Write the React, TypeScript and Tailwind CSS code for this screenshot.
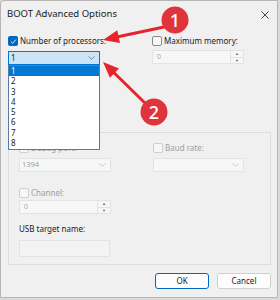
import React from "react";

const font = { fontFamily: '"Noto Sans", "Open Sans", sans-serif' };

function Check({ checked, disabled }: { checked?: boolean; disabled?: boolean }) {
  if (checked) {
    return (
      <span className="flex h-[10px] w-[10px] shrink-0 items-center justify-center rounded-[2px] bg-[#0067c0]">
        <svg width="7" height="7" viewBox="0 0 8 8">
          <path d="M1.2 4.2 L3.1 6 L6.8 1.8" fill="none" stroke="#fff" strokeWidth="1" />
        </svg>
      </span>
    );
  }
  return (
    <span
      className={
        "h-[10px] w-[10px] shrink-0 rounded-[2px] border bg-[#f7f7f7] " +
        (disabled ? "border-[#cfcfcf]" : "border-[#8a8a8a]")
      }
    />
  );
}

function Chevron({ color = "#9a9a9a" }: { color?: string }) {
  return (
    <svg width="7" height="4" viewBox="0 0 7 4">
      <path d="M0.5 0.5 L3.5 3.3 L6.5 0.5" fill="none" stroke={color} strokeWidth="0.8" />
    </svg>
  );
}

function Spin({ w, value }: { w: string; value: string }) {
  return (
    <div className="flex h-[14px]">
      <div className={`${w} flex items-center border border-[#e3e3e3] bg-[#f7f7f7] pl-[4px] text-[7px] text-[#a8a8a8]`}>
        {value}
      </div>
      <div className="flex w-[13px] flex-col border border-l-0 border-[#e3e3e3] bg-[#f7f7f7]">
        <div className="flex flex-1 items-center justify-center border-b border-[#e3e3e3] text-[4px] text-[#6a6a6a]">▲</div>
        <div className="flex flex-1 items-center justify-center text-[4px] text-[#6a6a6a]">▼</div>
      </div>
    </div>
  );
}

// red callout arrow: shaft from (x1,y1) to a filled head whose tip is (x2,y2)
function Arrow({ x1, y1, x2, y2 }: { x1: number; y1: number; x2: number; y2: number }) {
  const dx = x2 - x1;
  const dy = y2 - y1;
  const len = Math.hypot(dx, dy);
  const ux = dx / len;
  const uy = dy / len;
  const hl = 16;
  const hw = 6.5;
  const bx = x2 - ux * hl;
  const by = y2 - uy * hl;
  const head = `M${x2} ${y2} L${bx - uy * hw} ${by + ux * hw} L${bx + uy * hw} ${by - ux * hw} Z`;
  return (
    <g>
      <line x1={x1} y1={y1} x2={bx + ux * 2} y2={by + uy * 2} stroke="#e8232e" strokeWidth="3" strokeLinecap="round" />
      <path d={head} fill="#e8232e" />
    </g>
  );
}

export default function App() {
  const items = ["1", "2", "3", "4", "5", "6", "7", "8"];
  return (
    <div className="relative h-[300px] w-[280px] overflow-hidden bg-[#d9dadc]" style={font}>
      <div className="flex h-[298px] w-[278px] flex-col rounded-tl-[4px] border border-[#b5b5b5] bg-[#f0f0f0] text-[#1b1b1b]">
        {/* title bar */}
        <div className="flex h-[27px] items-center justify-between pl-[6px] pr-[8px]">
          <span className="text-[9.5px]">BOOT Advanced Options</span>
          <svg width="8" height="8" viewBox="0 0 8 8">
            <path d="M0.5 0.5 L7.5 7.5 M7.5 0.5 L0.5 7.5" stroke="#333" strokeWidth="0.9" />
          </svg>
        </div>

        {/* top options */}
        <div className="mt-[8px] flex pl-[7px]">
          <div className="w-[144px]">
            <div className="flex h-[10px] items-center gap-[2px] text-[8px]">
              <Check checked />
              <span>Number of processors:</span>
            </div>
            <div className="mt-[5px] flex h-[14px] w-[92px] items-center justify-between border border-[#0078d4] bg-[#cce4f7] pl-[2px] pr-[4px] text-[8px]">
              <span>1</span>
              <Chevron color="#6a7a8a" />
            </div>
          </div>
          <div>
            <div className="flex h-[10px] items-center gap-[2px] text-[8px]">
              <Check />
              <span>Maximum memory:</span>
            </div>
            <div className="mt-[4px]">
              <Spin w="w-[79px]" value="0" />
            </div>
          </div>
        </div>

        {/* debug settings group */}
        <div className="ml-[7px] mt-[67px] h-[133px] w-[263px] border border-[#dcdcdc] px-[10px] pt-[10px]">
          <div className="flex">
            <div className="w-[134px]">
              <div className="flex h-[10px] items-center gap-[2px] text-[8px] text-[#a0a0a0]">
                <Check disabled />
                <span>Debug port:</span>
              </div>
              <div className="mt-[5px] flex h-[14px] w-[92px] items-center justify-between border border-[#e3e3e3] bg-[#f7f7f7] pl-[2px] pr-[4px] text-[7.5px] text-[#a0a0a0]">
                <span>1394</span>
                <Chevron color="#c0c0c0" />
              </div>
            </div>
            <div>
              <div className="flex h-[10px] items-center gap-[2px] text-[8px] text-[#a0a0a0]">
                <Check disabled />
                <span>Baud rate:</span>
              </div>
              <div className="mt-[5px] flex h-[14px] w-[91px] items-center justify-end border border-[#e3e3e3] bg-[#f7f7f7] pr-[4px]">
                <Chevron color="#c0c0c0" />
              </div>
            </div>
          </div>
          <div className="mt-[16px] flex h-[10px] items-center gap-[2px] text-[8px] text-[#a0a0a0]">
            <Check disabled />
            <span>Channel:</span>
          </div>
          <div className="mt-[2px]">
            <Spin w="w-[79px]" value="0" />
          </div>
          <div className="mt-[10px] text-[8px] leading-[10px]">USB target name:</div>
          <div className="mt-[6px] h-[17px] w-[91px] border border-[#e3e3e3] bg-[#f3f3f3]" />
        </div>

        {/* buttons */}
        <div className="mt-[8px] flex justify-end gap-[8px] pr-[6px]">
          <button className="flex h-[16px] w-[54px] items-center justify-center rounded-[3px] border border-[#0067c0] bg-[#fdfdfd] text-[8px]">
            OK
          </button>
          <button className="flex h-[16px] w-[54px] items-center justify-center rounded-[3px] border border-[#d0d0d0] bg-[#fdfdfd] text-[8px]">
            Cancel
          </button>
        </div>
      </div>

      {/* open dropdown list */}
      <div className="absolute left-[8px] top-[65px] w-[92px] border border-[#5a7aa0] bg-white pb-[1px] text-[8px]">
        {items.map((n, i) => (
          <div
            key={n}
            className={"h-[10.3px] pl-[2px] leading-[10.3px] " + (i === 0 ? "bg-[#0078d4] text-white" : "text-[#1b1b1b]")}
          >
            {n}
          </div>
        ))}
      </div>

      {/* annotations */}
      <svg className="pointer-events-none absolute left-0 top-0" width="280" height="300" viewBox="0 0 280 300">
        <Arrow x1={164} y1={27} x2={103} y2={40} />
        <circle cx="175" cy="20" r="13.5" fill="#e0343c" />
        <text x="175" y="26.5" textAnchor="middle" fontSize="18" fontWeight="500" fill="#fff" style={font}>1</text>

        <Arrow x1={146} y1={104} x2={103} y2={62} />
        <circle cx="154" cy="112" r="13.5" fill="#e0343c" />
        <text x="154" y="118.5" textAnchor="middle" fontSize="18" fontWeight="500" fill="#fff" style={font}>2</text>
      </svg>
    </div>
  );
}
